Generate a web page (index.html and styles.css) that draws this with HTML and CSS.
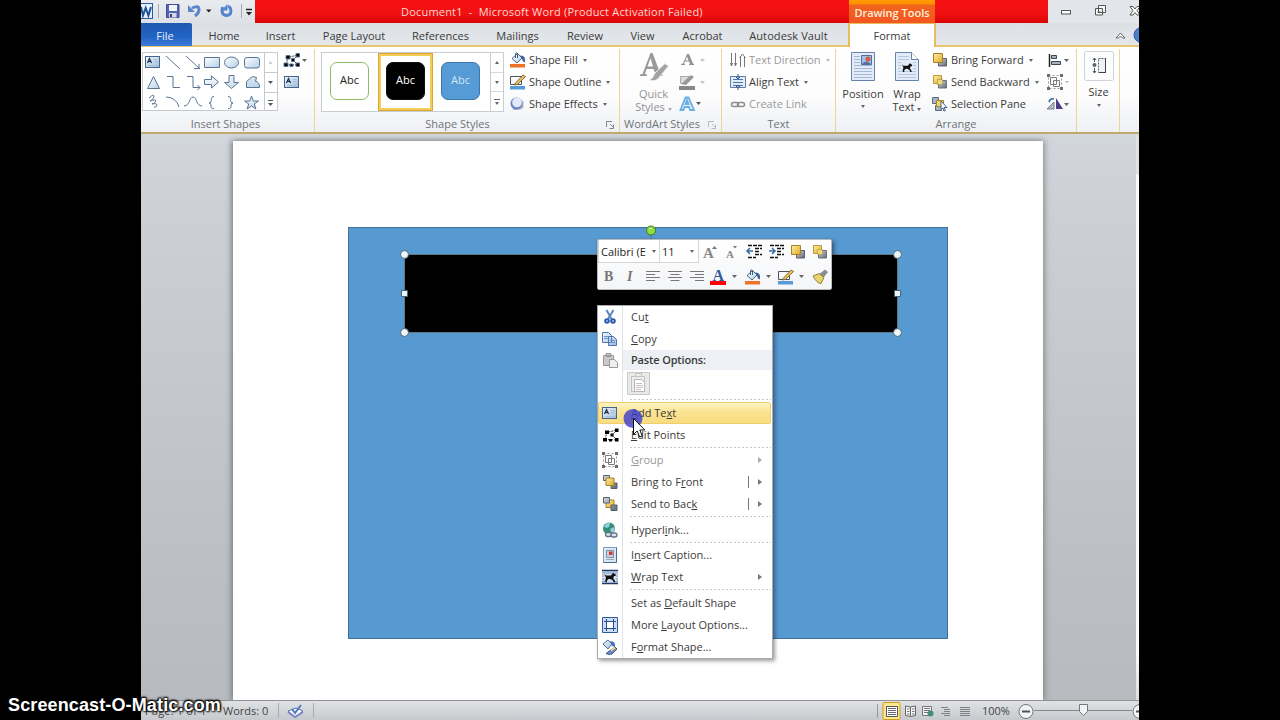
FILE: index.html
```html
<!DOCTYPE html>
<html lang="en">
<head>
<meta charset="utf-8">
<title>Document1 - Microsoft Word</title>
<link rel="stylesheet" href="styles.css">
</head>
<body>
<svg class="defs" width="0" height="0">
  <defs>
    <linearGradient id="paleBlue" x1="0" y1="0" x2="1" y2="1"><stop offset="0" stop-color="#fff"/><stop offset="1" stop-color="#b4d0e8"/></linearGradient>
    <linearGradient id="boxBlue" x1="0" y1="0" x2="1" y2="1"><stop offset="0" stop-color="#f4f8fc"/><stop offset="1" stop-color="#9dbad9"/></linearGradient>
    <linearGradient id="gold" x1="0" y1="0" x2="1" y2="1"><stop offset="0" stop-color="#fff0a0"/><stop offset="1" stop-color="#dfa92c"/></linearGradient>
    <linearGradient id="steel" x1="0" y1="0" x2="1" y2="1"><stop offset="0" stop-color="#d5dae2"/><stop offset="1" stop-color="#5c6675"/></linearGradient>
  </defs>
  <symbol id="textbox" viewBox="0 0 16 14"><rect x=".5" y="1.500" width="14" height="11" fill="url(#boxBlue)" stroke="#45658e"/><path d="M2.500 8 4.500 3.500 6.500 8M3.200 6.500h2.600" fill="none" stroke="#1b2f52" stroke-width="1.200"/><path d="M8.500 4.500h4M8.500 6.500h4M3 10.500h10" stroke="#a9bfd6"/></symbol>
  <symbol id="points" viewBox="0 0 18 14"><path d="M3.500 11.500 4.500 4.500 15 2 10 7 15 12Z" fill="none" stroke="#333" stroke-dasharray="2 1"/><path d="M3 2.500h4v3.500h-4zM1 10h4v3.500h-4zM13 0.500h3.500v3.500h-3.500zM8.500 5.500h3v3h-3zM13 10h3.500v3.500h-3.500zM7 11h3v2.500h-3z" fill="#000"/></symbol>
  <symbol id="forward" viewBox="0 0 16 16"><path d="M6.500 6.500h8v7.500h-8z" fill="url(#steel)" stroke="#59616c"/><path d="M1.500 1.500h9v9h-9z" fill="url(#gold)" stroke="#a88026"/></symbol>
  <symbol id="backward" viewBox="0 0 16 16"><path d="M1.500 1.500h8v8h-8z" fill="url(#gold)" stroke="#bd9a40"/><path d="M6.500 6.500h8v7.500h-8z" fill="url(#steel)" stroke="#69717c"/><path d="M5.500 5.500h5v5h-5z" fill="#eedb78" stroke="#a98f3c" stroke-width=".6"/></symbol>
  <symbol id="tofront" viewBox="0 0 16 16"><path d="M1.500 1.500h6v5h-6zM9 9h6v5.500H9z" fill="url(#steel)" stroke="#59616c"/><path d="M4 4h8v7.500H4z" fill="url(#gold)" stroke="#a88026"/></symbol>
  <symbol id="toback" viewBox="0 0 16 16"><path d="M4 4h8v7.500H4z" fill="url(#gold)" stroke="#a88026"/><path d="M1.500 1.500h6v5.500h-6zM9 9h6v5.500H9z" fill="url(#steel)" stroke="#59616c"/></symbol>
  <symbol id="group" viewBox="0 0 16 16"><path d="M1.500 1.500h13v13h-13z" fill="none" stroke="#999" stroke-dasharray="2 2"/><path d="M3.500 3.500h6v7h-6zM6.500 6.500h6v6h-6z" fill="none" stroke="#7c7c7c"/><path d="M0 0h3v3H0zM13 0h3v3h-3zM0 13h3v3H0zM13 13h3v3h-3z" fill="#6d6d6d"/></symbol>
  <symbol id="bucket" viewBox="0 0 18 16"><path d="M3 6.500 8.500 1.500 13 6 8 11Z" fill="url(#paleBlue)" stroke="#4c6486"/><path d="M6.500 6V1.500Q8-.5 8.500 2v4" fill="none" stroke="#455e83"/><path d="M11 3.500q6-.5 5 7-3-1-3-4.500z" fill="#3a5f96"/><path d="M1 12h15v3.500H1z" fill="#ed7426"/></symbol>
  <symbol id="outline" viewBox="0 0 18 16"><path d="M1.500 2.500h11v8h-11z" fill="#f7f9fb" stroke="#4a5362"/><path d="M6 9.500 14 1l2.500 1.500L8.500 10.500 5.500 11z" fill="#edbd58" stroke="#70542b" stroke-width=".8"/><path d="M1 12h15v3.500H1z" fill="#569ad6"/></symbol>
  <symbol id="dog" viewBox="0 0 12 10"><path d="M0 1.500 2 3h5L8.500 1 9.500 0 10 1.200l2 .8-.6 1.500H10l-.8 2.500 1.300 1.500.8 2.500H9.700L8.500 7.500 6 6.500H4.500L3 8v2H1.500L1.200 7.500 2 5.500 1.500 4z" fill="#111"/></symbol>
  <symbol id="launcher" viewBox="0 0 8 8"><path d="M.5 6V.5H6M4 3l3 3M7.500 3.500v4h-4" fill="none" stroke="#81868c"/></symbol>
</svg>

<div class="window">
  <header class="titlebar">
    <div class="quick">
      <svg width="114" height="23" viewBox="141 0 114 23">
        <rect x="134.500" y="3.500" width="18" height="15" fill="#e6f0fb" stroke="#2a5ca0"/><path d="m141 7 2 8.500 2.700-7.500 2.700 7.500L151 7" fill="none" stroke="#1f529b" stroke-width="2"/>
        <path d="M158.500 4v14M241.500 4v14" stroke="#a7acb3"/>
        <path d="M166.500 4.500h12.500v13h-12.500z" fill="#5664b4" stroke="#404b92"/><path d="M169 5h8v6h-8z" fill="#eef4fc"/><path d="M169 13h7.500v4.500h-7.500z" fill="#d5dbe8"/><path d="M170 14h2v3h-2z" fill="#353f7c"/>
        <path d="M192 8q7-3.500 7 2 0 3-4 6" fill="none" stroke="#5c86cc" stroke-width="3"/><path d="m188 5v7h7z" fill="#5c86cc"/>
        <path d="M206 9.500h5.500l-2.700 3zM246 12h6l-3 3.500z" fill="#222"/><path d="M246 9.500h6" stroke="#222" stroke-width="1.500"/>
        <path d="M222.500 7q-2 8 4 8.500 6-.5 4-7-1-2-2.500-2" fill="none" stroke="#5583cf" stroke-width="3"/><path d="M227.500 4v6.500h-6z" fill="#5583cf"/>
      </svg>
    </div>
    <div class="caption">Document1&nbsp; -&nbsp; Microsoft Word (Product Activation Failed)</div>
    <div class="tools">Drawing Tools</div>
    <div class="redtail"></div>
    <svg class="controls" width="91" height="23" viewBox="1048 0 91 23">
      <rect x="1061.500" y="10.500" width="9" height="3.500" fill="#fff" stroke="#555"/>
      <path d="M1098.500 5.500h7v7h-7zM1095.500 8.500h7v6.500h-7z" fill="#f6f7f8" stroke="#555"/><path d="M1097.500 12h3" stroke="#555"/>
      <path d="M1130 6.500h3l2 2.500 2-2.500h3l-3 4 3 4.500h-3l-2-2.500-2 2.500h-3l3-4.500z" fill="#fff" stroke="#555"/>
    </svg>
  </header>

  <nav class="tabs">
    <span class="tab file">File</span><span class="tab home">Home</span><span class="tab insert">Insert</span><span class="tab layout">Page Layout</span><span class="tab refs">References</span><span class="tab mail">Mailings</span><span class="tab review">Review</span><span class="tab view">View</span><span class="tab acro">Acrobat</span><span class="tab vault">Autodesk Vault</span><span class="tab format">Format</span>
    <svg class="help" width="26" height="23" viewBox="1113 23 26 23"><path d="m1116 38 4.500-5 4.500 5h-2.500l-2-2-2 2z" fill="#fff" stroke="#666"/><circle cx="1141.500" cy="35" r="7.500" fill="#4a7fcb" stroke="#2d5a9e"/></svg>
  </nav>

  <section class="ribbon">
    <div class="group g-shapes">
      <div class="body">
        <svg width="170" height="66" viewBox="141 49 170 66" fill="none" stroke="#5b7494">
          <path d="M142.500 52.500h135v58h-135z" fill="#fff" stroke="#c5cad0"/><path d="M264.500 52.500v58M264.500 72.500h13M264.500 92.500h13" stroke="#c5cad0"/>
          <use href="#textbox" x="145" y="55" width="16" height="14"/>
          <path d="m166 56 14 13M186 56l14 13m-1-5v4.500h-5"/>
          <path d="M204.500 57.500h15v10h-15z" fill="url(#paleBlue)"/><ellipse cx="231.500" cy="62.500" rx="7" ry="5.500" fill="url(#paleBlue)"/><rect x="244.500" y="57.500" width="15" height="10.500" rx="2.500" fill="url(#paleBlue)"/>
          <path d="m153.500 76.500 6 12h-12z" fill="url(#paleBlue)"/><path d="M167 76.500h6v11h7M187 76.500h6v11h7m-2.500-2.500 2.500 2.500-2.500 2.500"/>
          <path d="M204.500 79.500h7v-3.500l7 6-7 6v-3.500h-7zM229 75.500h5v7h4.500l-7 6-7-6h4.500zM246.500 87.500v-6l6-5 4 1-1 4q4 0 4 6z" fill="url(#paleBlue)"/>
          <path d="M149 98q5-5 5-1-1 3-4 4 6-2 6 0-1 2-4 3 5-1 5 1-1 3-3 2M166 97q10 0 13 10M184 106c6 0 5-9 9-9s3 9 9 9M214 96.500c-4 0-2 4-3 5.500q-1 1-2 1 2 0 2 2c0 3 0 3.500 3 3.500M228 96.500c4 0 2 4 3 5.500q1 1 2 1-2 0-2 2c0 3 0 3.500-3 3.500"/>
          <path d="m251.500 96 1.800 5h5.200l-4.200 3 1.600 5-4.400-3-4.400 3 1.600-5-4.200-3h5.200z" fill="url(#paleBlue)"/>
          <path d="M268.500 64h4l-2-3z" fill="#ccc" stroke="none"/><path d="M268 81h5l-2.500 3zM268 103h5l-2.500 3z" fill="#555" stroke="none"/><path d="M268 100.500h5" stroke="#555"/>
          <use href="#points" x="283" y="53" width="18" height="14"/><path d="M302 59h5l-2.500 3z" fill="#666" stroke="none"/>
          <use href="#textbox" x="284" y="75" width="16" height="14"/>
        </svg>
      </div>
      <div class="label">Insert Shapes</div>
    </div>

    <div class="group g-styles">
      <div class="body">
        <div class="gallery">
          <div class="cell"><div class="swatch green">Abc</div></div>
          <div class="cell picked"><div class="swatch black">Abc</div></div>
          <div class="cell"><div class="swatch blue">Abc</div></div>
          <div class="scroll"><span><i class="up"></i></span><span><i class="down"></i></span><span><i class="bar"></i><i class="down"></i></span></div>
        </div>
        <div class="rows">
          <div class="row"><svg width="18" height="16"><use href="#bucket"/></svg><span>Shape Fill</span><i class="down"></i></div>
          <div class="row"><svg width="18" height="16"><use href="#outline"/></svg><span>Shape Outline</span><i class="down"></i></div>
          <div class="row"><svg width="18" height="16"><path d="M6 5h8.500v7q-4 3-11 1.500z" fill="#b2b7ca"/><circle cx="7.500" cy="7.500" r="6" fill="#6c84c6"/><circle cx="8" cy="6.500" r="4.800" fill="#e3ebfb"/></svg><span>Shape Effects</span><i class="down"></i></div>
        </div>
      </div>
      <div class="label"><span class="push">Shape Styles</span><svg class="launch" width="8" height="8"><use href="#launcher"/></svg></div>
    </div>

    <div class="group g-wordart">
      <div class="body">
        <div class="big quickstyles">
          <svg width="32" height="34" viewBox="0 0 32 34"><path d="M2 26h7v-1.500l-2-.5 1.500-5h7l2 5-2 .5V26h9v-1.500l-2-.5L14.500 3h-2L4.500 24l-2.500.5zM9.500 16.500 12.500 8l2.500 8.500z" fill="#9a9a9a"/><path d="m17 23 10-9.500 3.500 2.500-9 11q-3 5-10 3 4-2 5.500-7z" fill="#a2a2a2" stroke="#eee"/></svg>
          <span>Quick</span><span>Styles<i class="down"></i></span>
        </div>
        <svg width="32" height="66" viewBox="676 49 32 66"><path d="M681 65h4v-1l-1-.5 1-2h4l1 2-1 .5v1h5v-1l-1-.5-4-9.500h-2l-4 9.500-2 .5zm4.500-4.500 1.500-4 1.500 4z" fill="#929292"/><path d="M680.500 76.500h9l-6 7h-3z" fill="#ddd" stroke="#aaa"/><path d="m681 84 10-9 3 2-8 8z" fill="#999"/><path d="M679 86h16v4h-16z" fill="#888"/><path d="m680.500 110 5-12.500h3l5.500 12.500h-4l-1-3h-4.500l-1 3zm5-6h3l-1.500-4z" fill="#dff0ff" stroke="#6daee0" stroke-width="1.800"/><path d="M700 59h5l-2.500 3zM700 81h5l-2.500 3z" fill="#c4c4c4"/><path d="M696 102h5l-2.500 3z" fill="#555"/></svg>
      </div>
      <div class="label"><span>WordArt Styles</span><svg class="launch pale" width="8" height="8"><use href="#launcher"/></svg></div>
    </div>

    <div class="group g-text">
      <div class="body rows">
        <div class="row off"><svg width="16" height="16" fill="none" stroke="#777"><path d="M1.500 1v13m-1-3 1 3 1-3M5.500 1v13m-1-3 1 3 1-3M10.500 4v11M14.500 4v11M9.500 6l3-4 3 4"/></svg><span>Text Direction</span><i class="down"></i></div>
        <div class="row"><svg width="16" height="16"><path d="M.5 2.500h15v11H.5z" fill="#e3edf8" stroke="#5f7da4"/><path d="M3 5.500h10M3 8.500h10M3 11.500h10" stroke="#4e77aa"/><path d="M8 0v5M8 16v-5M6 3l2 2 2-2M6 13l2-2 2 2" fill="none" stroke="#345b91"/></svg><span>Align Text</span><i class="down"></i></div>
        <div class="row off"><svg width="16" height="16" fill="none" stroke="#8c8c8c"><rect x="1.500" y="6.500" width="7" height="4" rx="2" stroke-width="1.500"/><rect x="7.500" y="6.500" width="7" height="4" rx="2" stroke-width="1.500"/></svg><span>Create Link</span></div>
      </div>
      <div class="label">Text</div>
    </div>

    <div class="group g-arrange">
      <div class="body">
        <div class="big position">
          <svg width="26" height="32"><path d="M1.500 1.500h23v28h-23z" fill="#e2ebf7" stroke="#6683ac"/><path d="M4 14.500h18M4 17.500h18M4 20.500h18M4 23.500h18M4 26.500h18M4 5.500h6M4 8.500h6M4 11.500h6" stroke="#a2b9d5"/><path d="M11.500 4.500h10v9h-10z" fill="#9fc1ea" stroke="#52709e"/><circle cx="18" cy="8" r="2.500" fill="#d35a45"/><path d="M12 13q4-5 9 0z" fill="#5d6fa0"/></svg>
          <span>Position</span><i class="down"></i>
        </div>
        <div class="big wrap">
          <svg width="26" height="32"><path d="M1.500 1.500h16l7 7v21h-23z" fill="#e2ebf7" stroke="#6683ac"/><path d="M17.500 1.500v7h7" fill="#fff" stroke="#6683ac"/><path d="M4 5.500h11M4 8.500h11M4 11.500h3M4 14.500h3M4 17.500h3M19 11.500h3M19 14.500h3M19 17.500h3M4 20.500h18M4 23.500h18M4 26.500h18" stroke="#b4c8df"/><use href="#dog" x="7.500" y="12" width="11" height="9"/></svg>
          <span>Wrap</span><span>Text<i class="down"></i></span>
        </div>
        <div class="rows">
          <div class="row"><svg width="16" height="16"><use href="#forward"/></svg><span>Bring Forward</span><i class="down"></i></div>
          <div class="row"><svg width="16" height="16"><use href="#backward"/></svg><span>Send Backward</span><i class="down"></i></div>
          <div class="row"><svg width="16" height="16"><path d="M.5 1.500h6v6h-6zM3.500 9.500h6v5h-6z" fill="#aab5c4" stroke="#5d6b7e"/><path d="M4.500 4.500h7v6h-7z" fill="#efd768" stroke="#a8862b"/><path d="m9 5 6 6.500h-3l1.500 3-1.500.5-1-3-2 1.500z" fill="#fff" stroke="#48628f"/></svg><span>Selection Pane</span></div>
        </div>
        <svg class="mini" width="26" height="66" viewBox="1045 49 26 66"><path d="M1048.500 54v13" stroke="#222" stroke-width="1.500"/><path d="M1050.500 55.500h5v3h-5zM1050.500 61.500h9v3h-9z" fill="#a9b4c1" stroke="#3d4650"/><use href="#group" x="1046" y="74" width="16" height="16"/><path d="m1046 109 7-7v7z" fill="#b6bdc8" stroke="#77808c"/><path d="m1055 98 7 11h-7z" fill="#503c86"/><path d="M1048 102q1-4 5-3" fill="none" stroke="#3468ad" stroke-width="1.500"/><path d="M1063 59h5l-2.500 3zM1063 103h5l-2.500 3z" fill="#666"/><path d="M1064 81h4l-2 2.500z" fill="#bbb"/></svg>
      </div>
      <div class="label">Arrange</div>
    </div>

    <div class="group g-size">
      <div class="big size">
        <svg width="30" height="30"><rect x=".5" y=".5" width="29" height="29" rx="2" fill="#fdfdfe" stroke="#ccd3da"/><path d="M14.500 7.500h7v14h-7z" fill="#eef3f8" stroke="#666" stroke-dasharray="2 1"/><path d="M21.500 7v15M15 21.500h7" stroke="#444"/><path d="M10.500 7v4M10.500 17v5M9 9l1.500-2L12 9M9 20l1.500 2 1.500-2" fill="none" stroke="#456"/><circle cx="10.500" cy="14" r="2" fill="#567"/></svg>
        <span>Size</span><i class="down"></i>
      </div>
    </div>
  </section>

  <main class="desk">
    <div class="page">
      <div class="bluebox"></div>
      <div class="blackbox"></div>
      <svg class="handles" width="510" height="120" viewBox="398 222 510 120">
        <path d="M404.500 254.500h493v78h-493zM651 234v20" fill="none" stroke="#61788b"/>
        <g fill="#e9f6fb" stroke="#4b6470"><circle cx="404.500" cy="254.500" r="4"/><circle cx="897.500" cy="254.500" r="4"/><circle cx="404.500" cy="332.500" r="4"/><circle cx="897.500" cy="332.500" r="4"/><path d="M401.500 290.500h6v6h-6zM894.500 290.500h6v6h-6z"/></g>
        <circle cx="651" cy="230.500" r="4.500" fill="#8ddf3f" stroke="#427622"/><path d="M649 228.500h3" stroke="#d9ffb0"/>
      </svg>
    </div>
    <div class="vscroll"></div>
  </main>

  <footer class="status">
    <span class="pages">Page: 1 of 1</span><span class="words">Words: 0</span>
    <svg width="36" height="20" viewBox="278 700 36 20"><path d="M278.500 703v15M313.500 703v15" stroke="#a9adb2"/><path d="m288 711 8-3 7 3-8 6z" fill="#fff" stroke="#5370b2"/><path d="m288 712 7 5 8-5" fill="none" stroke="#7d86c8" stroke-width="2"/><path d="m292 709 3 4 6-8" fill="none" stroke="#5279bd" stroke-width="2"/></svg>
    <svg class="views" width="100" height="20" viewBox="876 700 100 20"><path d="M877.500 704v14" stroke="#999"/><rect x="883" y="702.500" width="17" height="17" rx="1" fill="#fbe78c" stroke="#d39b20"/><path d="M886.500 706.500h11v10h-11z" fill="#fff" stroke="#555"/><path d="M888 708.500h8M888 710.500h8M888 712.500h8M888 714.500h8" stroke="#667"/><path d="m905.500 706 5 1 5-1v9.500l-5 1-5-1zM910.500 707v9" fill="#f7f7f7" stroke="#666"/><path d="M907 709h2.500M907 711.500h2.500M907 714h2.500M912 709h2.500M912 711.500h2.500M912 714h2.500" stroke="#777"/><path d="M922.500 706.500h9v9h-9z" fill="#f5f5f5" stroke="#777"/><path d="M924 708.500h6M924 710.500h6M924 712.500h4" stroke="#777"/><circle cx="930.500" cy="713.500" r="3" fill="#458d73"/><path d="M941 707.500h7M944 709.500h6M944 711.500h6M941 713.500h9M944 715.500h6M960 707.500h10M960 709.500h10M960 711.500h10M960 713.500h10M960 715.500h10" stroke="#7d8186"/></svg>
    <span class="pct">100%</span>
    <svg width="125" height="20" viewBox="1014 700 125 20"><path d="M1034 710.500h98" stroke="#85898e"/><g fill="#f1f2f3" stroke="#777"><circle cx="1026" cy="711.500" r="7"/><circle cx="1140" cy="711.500" r="7"/><path d="M1079.500 704.500h8v7l-4 4-4-4z"/></g><path d="M1022 711.500h8M1136 711.500h8" stroke="#555" stroke-width="2"/></svg>
  </footer>
</div>

<div class="minibar">
  <div class="line top">
    <span class="box font">Calibri (E<i class="down"></i></span><span class="box pt">11<i class="down"></i></span>
    <svg width="132" height="24" viewBox="699 240 132 24"><g class="serif" fill="#888" font-weight="bold"><text x="703" y="258" font-size="15">A</text><text x="726" y="258" font-size="11">A</text></g><path d="M712 249h5l-2.500-3zM733 246h4l-2 2.500z" fill="#777"/><path d="M748 245.500h14M755 248.500h7M755 251.500h5M755 254.500h7M748 257.500h8M770 245.500h14M777 248.500h7M777 251.500h5M777 254.500h7M770 257.500h8" stroke="#111" stroke-width="1.600" stroke-dasharray="4 1"/><path d="M753 251h-6m3-3-3 3 3 3M769 251h6m-3-3 3 3-3 3" fill="none" stroke="#3a67a9" stroke-width="1.500"/><use href="#forward" x="790" y="244" width="16" height="16"/><use href="#backward" x="812" y="244" width="16" height="16"/></svg>
  </div>
  <div class="line bottom">
    <svg width="233" height="25" viewBox="598 264 233 25"><g class="serif" fill="#777"><text x="604" y="281" font-size="14" font-weight="bold">B</text><text x="627" y="281" font-size="14" font-style="italic" font-weight="bold">I</text></g><path d="M646 271.500h14M646 274.500h9M646 277.500h14M646 280.500h9M668 271.500h14M670.500 274.500h9M668 277.500h14M670.500 280.500h9M690 271.500h14M695 274.500h9M690 277.500h14M695 280.500h9" stroke="#777"/><text class="serif" x="712.500" y="281" font-size="16" font-weight="bold" fill="#31599d">A</text><path d="M710 281h16v4h-16z" fill="#f00"/><use href="#bucket" x="744" y="269" width="18" height="16"/><use href="#outline" x="777" y="269" width="18" height="16"/><path d="M732 275h5l-2.500 3zM766 275h5l-2.500 3zM799 275h5l-2.500 3z" fill="#666"/><path d="m820 274 5-4 2.500 2-4 5z" fill="#8c8f98" stroke="#666" stroke-width=".6"/><path d="m813 276 6-2.500 5 4-3 6q-4 0-8-7.500z" fill="#e8d36b" stroke="#92833d"/></svg>
  </div>
</div>

<div class="menu">
  <div class="item"><svg width="16" height="16"><path d="m4.500 1 5 9M11.500 1 6 10" stroke="#5c86c0" stroke-width="2"/><g fill="none" stroke="#2a5bb0" stroke-width="2"><circle cx="5" cy="12" r="1.800"/><circle cx="11" cy="12" r="1.800"/></g></svg><span>Cu<u>t</u></span></div>
  <div class="item"><svg width="16" height="16"><g fill="url(#boxBlue)" stroke="#4a76b5"><path d="M.5 1.500h6l3 3v7h-9zM6.500 5.500h5l3 3v6h-8z"/></g><path d="M2 5.500h4M2 7.500h4M8 9.500h5M8 11.500h5" stroke="#6591c9"/></svg><span><u>C</u>opy</span></div>
  <div class="item head"><svg width="16" height="16"><path d="M1.500 3.500h10v10h-10zM4 1.500h5v3H4z" fill="#c9c9c9" stroke="#999"/><path d="M7.500 7.500h5l3 3v5h-8z" fill="#eee" stroke="#999"/></svg><span>Paste Options:</span></div>
  <div class="paste"><svg width="23" height="23"><path d="M.5.500h22v22H.500z" fill="#e9e9e9" stroke="#cacaca"/><path d="M4.500 4.500h13v15h-13zM8.500 1.500h6v3h-6z" fill="#ededed" stroke="#c3c3c3"/><path d="M7.500 7.500h7l3 3v9h-10z" fill="#fff" stroke="#b5b5b5"/><path d="M9 11.500h6M9 13.500h7M9 15.500h7M9 17.500h5" stroke="#ccbebe"/></svg></div>
  <div class="sep"></div>
  <div class="item hot"><svg width="16" height="14"><use href="#textbox"/></svg><span><u>A</u>dd Te<u>x</u>t</span></div>
  <div class="item"><svg width="18" height="14"><use href="#points"/></svg><span><u>E</u>dit Points</span></div>
  <div class="sep"></div>
  <div class="item off"><svg width="16" height="16"><use href="#group"/></svg><span><u>G</u>roup</span><i class="right"></i></div>
  <div class="item"><svg width="16" height="16"><use href="#tofront"/></svg><span class="wide">Bring to F<u>r</u>ont</span><i class="right split"></i></div>
  <div class="item"><svg width="16" height="16"><use href="#toback"/></svg><span>Send to Bac<u>k</u></span><i class="right split"></i></div>
  <div class="sep"></div>
  <div class="item"><svg width="16" height="16"><circle cx="7" cy="6.500" r="6" fill="#378e78"/><path d="M2 4q3-4 6-3l-1 4-3 1zM8 7l4-2q2 4-2 7z" fill="#8fcfdf"/><g fill="#dde3ea" stroke="#647385" stroke-width="1.300"><rect x="3.500" y="10.500" width="6" height="4" rx="2"/><rect x="9" y="11" width="6" height="4" rx="2"/></g></svg><span>Hyperl<u>i</u>nk...</span></div>
  <div class="sep"></div>
  <div class="item"><svg width="16" height="16"><path d="M1.500.500h13v15h-13z" fill="#dbe6f5" stroke="#7f9cc4"/><path d="M14.500.500v15h-13" fill="none" stroke="#4d6a96"/><path d="M4.500 3.500h7v7h-7z" fill="#c8d2e0" stroke="#7c8fa9"/><path d="M7 4.500h3.500V8H7z" fill="#d33"/><path d="M4 12.500h8" stroke="#9ab"/></svg><span>I<u>n</u>sert Caption...</span></div>
  <div class="item"><svg width="16" height="16"><path d="M0 1h16v14H0z" fill="#cfddf0"/><path d="M0 1.500h16M0 14.500h16" stroke="#1f3a63" stroke-width="1.500"/><path d="M0 4h16M0 7h2M14 7h2M0 10h2M14 10h2M0 12.500h3M13 12.500h3" stroke="#7e98bd"/><use href="#dog" x="2" y="3.500" width="12" height="10"/></svg><span><u>W</u>rap Text</span><i class="right"></i></div>
  <div class="sep"></div>
  <div class="item"><svg width="16" height="16"></svg><span>Set as <u>D</u>efault Shape</span></div>
  <div class="item"><svg width="16" height="16"><path d="M.5.500h15v15H.500z" fill="#cbdcf4" stroke="#315a9b"/><path d="M4.500 2v12M11.500 2v12M2 4.500h12M2 11.500h12" stroke="#244f92"/><path d="M5 5h6v6H5z" fill="#fff"/></svg><span>More <u>L</u>ayout Options...</span></div>
  <div class="item"><svg width="16" height="16"><path d="m1 5 5-4 4 4-4 5z" fill="url(#boxBlue)" stroke="#4c6fa5"/><path d="M8 2q6 0 5 6L10 7z" fill="#4773b9"/><path d="m6 13 7-5 2 2-5 5q-4 1-6-.5z" fill="#6d8ecb" stroke="#3b5688"/><path d="m9 11.500 4-3" stroke="#f2d564" stroke-width="2"/></svg><span>F<u>o</u>rmat Shape...</span></div>
</div>

<svg class="pointer" width="30" height="34" viewBox="622 406 30 34"><circle cx="633" cy="418.500" r="9.500" fill="#3c3ccf" fill-opacity=".8"/><path d="M633.500 418.500v16l3.700-3.500 2.500 6 2.600-1-2.500-6h5z" fill="#fff" stroke="#111"/></svg>
<div class="watermark">Screencast-O-Matic.com</div>
</body>
</html>
```
FILE: styles.css
```css
* { box-sizing: border-box; }
body { margin: 0; width: 1280px; height: 720px; overflow: hidden; position: relative; background: #000; font: 11px/14px "Open Sans", "Noto Sans", sans-serif; color: #3b3b3b; white-space: nowrap; display: flex; justify-content: center; }
svg { display: block; flex: none; }
.defs { position: absolute; }
.serif { font-family: "Liberation Serif", serif; }
.window { width: 998px; height: 720px; display: flex; flex-direction: column; overflow: hidden; }
i.down, i.up, i.right { display: inline-block; flex: none; width: 0; height: 0; border: 2.5px solid transparent; border-bottom: 0; border-top: 3px solid #666; }
i.up { border-top: 0; border-bottom: 3px solid #666; }
.off { color: #999; }
.off i.down { border-top-color: #bbb; }

.titlebar { height: 23px; display: flex; background: #dfe3e8; }
.quick { width: 114px; background: linear-gradient(#e9ecef, #dde1e6); }
.caption { width: 594px; padding-left: 146px; line-height: 23px; letter-spacing: .2px; color: #ffd9cf; background: linear-gradient(#f71013, #f11012 60%, #d80505); }
.tools { width: 86px; text-align: center; line-height: 20px; padding-top: 3px; color: #fff0df; font-weight: 600; background: linear-gradient(#ff9c00 0, #ff9200 4px, #f1641d 5px, #f35622 100%); }
.redtail { width: 113px; background: linear-gradient(#f71013, #f11012 60%, #d80505); }
.controls { background: #e2e5e9; }

.tabs { height: 24px; display: flex; background: linear-gradient(#dcdfe4, #e4e7ea); border-bottom: 2px solid #ebc66d; line-height: 25px; }
.tab { text-align: center; height: 22px; }
.tab.file { width: 51px; height: 23px; padding-right: 3px; color: #e6f1ff; background: linear-gradient(#1e5ab0, #2263c4 60%, #3b7cdb); border-radius: 0 2px 0 0; }
.home { width: 61px; padding-left: 3px; } .insert { width: 55px; } .layout { width: 92px; } .refs { width: 81px; }
.mail { width: 73px; } .review { width: 62px; } .view { width: 53px; } .acro { width: 67px; } .vault { width: 107px; letter-spacing: .1px; padding-right: 2px; }
.tab.format { width: 88px; margin-left: 5px; height: 25px; line-height: 23px; background: #fff; border: 1px solid #e8bd5c; border-width: 1px 2px 0; }
.help { margin-left: auto; }

.ribbon { height: 87px; padding-top: 2px; display: flex; background: linear-gradient(#fff, #fcfcfd 60%, #eef0f3); border-bottom: 2px solid #c2a869; }
.group { display: flex; flex-direction: column; border-right: 1px solid #ecd49b; height: 83px; }
.body { height: 66px; display: flex; }
.label { height: 16px; line-height: 17px; text-align: center; color: #6f747a; display: flex; justify-content: center; position: relative; }
.launch { position: absolute; right: 5px; top: 6px; }
.pale { opacity: .5; }
.g-shapes { width: 174px; } .g-shapes .label { padding-right: 4px; }
.g-styles { width: 305px; } .g-styles .push { padding-right: 19px; }
.g-wordart { width: 102px; } .g-wordart .label { justify-content: flex-start; padding-left: 4px; }
.g-text { width: 114px; }
.g-arrange { width: 241px; }
.g-size { width: 43px; }
.gallery { width: 183px; height: 60px; margin: 3px 0 0 6px; display: flex; border: 1px solid #c8cdd3; background: #fff; }
.cell { width: 55.500px; padding: 9px 0 0 8px; }
.cell.picked { border: 3px solid #f3cd5c; outline: 1px solid #dfa72a; outline-offset: -1px; padding: 6px 0 0 5.500px; background: #fff; }
.swatch { width: 39px; height: 38px; border-radius: 7px; text-align: center; line-height: 34px; }
.green { border: 1.500px solid #8bbb67; color: #222; } .black { background: #000; color: #fff; border: 1px solid #111; } .blue { background: #569bd5; color: #cfe4f5; border: 1px solid #3b77ac; }
.scroll { margin-left: auto; width: 13px; border-left: 1px solid #c8cdd3; display: flex; flex-direction: column; }
.scroll span { flex: 1; display: flex; flex-direction: column; align-items: center; justify-content: center; gap: 2px; border-bottom: 1px solid #d5d9dd; }
.scroll span:last-child { border: 0; }
.bar { width: 6px; height: 1px; background: #666; }
.rows { display: flex; flex-direction: column; }
.g-styles .rows { margin-left: 5px; }
.row { height: 22px; display: flex; align-items: center; }
.row span { margin-left: 3px; } .row i { margin-left: 5px; }
.g-styles .row span { margin-left: 2px; }
.big { display: flex; flex-direction: column; align-items: center; line-height: 13px; }
.big i { margin-left: 3px; }
.quickstyles { width: 56px; padding-left: 11px; color: #929292; }
.quickstyles svg { margin: 1px 0 3px; } .quickstyles i.down { border-top-color: #aaa; }
.body.rows { padding-left: 8px; }
.position { width: 54px; padding-top: 2px; } .wrap { width: 34px; padding-top: 2px; }
.position svg, .wrap svg { margin-bottom: 4px; }
.position i { margin: 5px 0 0; }
.g-arrange .rows { margin-left: 8px; }
.g-arrange .mini { margin-left: auto; margin-right: 4px; }
.size { padding-top: 2px; padding-left: 1px; } .size svg { margin-bottom: 4px; } .size i { margin: 6px 0 0; }

.desk { height: 566px; position: relative; overflow: hidden; display: flex; background: linear-gradient(#d2d6dd, #ccd0d4 15%, #bcc0c4 75%, #b7bbbf); }
.page { width: 810px; margin: 7px 0 0 92px; background: #fff; box-shadow: -2px 0 5px #777c, 2px 0 6px #7779; position: relative; }
.vscroll { width: 3px; margin-left: auto; background: linear-gradient(#dfe0e3 40px, #f8f8fa 41px 520px, #dcdde3); }
.bluebox { position: absolute; left: 115px; top: 86px; width: 600px; height: 412px; background: #5799d1; border: 1px solid #41719c; }
.blackbox { position: absolute; left: 171px; top: 113px; width: 493px; height: 78px; background: #000; }
.handles { position: absolute; left: 165px; top: 81px; }

.status { height: 20px; display: flex; border-top: 1px solid #8e9297; background: linear-gradient(#e0e2e4, #c6c9cd); line-height: 20px; color: #444; }
.status svg { margin-top: -1px; }
.pages { width: 78px; padding-left: 4px; letter-spacing: .2px; } .words { width: 59px; padding-left: 4px; }
.views { margin-left: auto; } .pct { width: 38px; padding-left: 6px; }

.minibar { position: absolute; left: 597px; top: 239px; width: 235px; height: 51px; border: 1px solid #b7bbc0; border-radius: 2px; background: linear-gradient(#fff, #f4f5f7); box-shadow: 2px 2px 4px #0007; color: #222; }
.line { display: flex; height: 24px; }
.box { display: flex; align-items: center; justify-content: space-between; height: 23px; border: 1px solid #d1d5d9; border-top: 0; padding: 1px 4px 0 2px; background: #fff; }
.font { width: 62px; padding: 1px 3px 0 2px; } .pt { width: 39px; border-left: 0; }

.menu { position: absolute; left: 597px; top: 305px; width: 176px; height: 354px; border: 1px solid #a7abb0; background: linear-gradient(90deg, #fff 24px, #dfe3e7 24px 25px, #fff 25px); box-shadow: 2px 2px 4px #0006; }
.item { height: 22px; display: flex; align-items: center; padding: 0 10px 0 4px; }
.item > svg { margin-right: 13px; } .item > svg[width="18"] { margin-right: 11px; }
.item i.right { margin-left: auto; border: 3px solid transparent; border-right: 0; border-left: 4px solid #777; }
.off i.right { border-left-color: #aaa; }
.item i.split { position: relative; }
.item i.split::before { content: ""; position: absolute; left: -14px; top: -6px; width: 1px; height: 12px; background: #777; }
.wide { letter-spacing: .1px; }
.menu u { text-underline-offset: 1px; text-decoration-thickness: 1px; }
.head { height: 20px; font-weight: 600; letter-spacing: -.15px; background: linear-gradient(90deg, transparent 25px, #edf0f4 25px); }
.paste { height: 28px; padding: 2px 0 0 29px; }
.sep { height: 3.500px; margin: 0 1px 0 32px; background: repeating-linear-gradient(90deg, #c6c9cd 0 2px, transparent 2px 4px) 0 50% / 100% 1px no-repeat; }
.hot { background: linear-gradient(#fff3c4, #fbe390 45%, #f8dc80); border: 1px solid #edcf70; border-radius: 2px; padding-left: 3px; margin-right: 1px; }
.pointer { position: absolute; left: 622px; top: 406px; }
.watermark { position: absolute; left: 8px; top: 695px; font: bold 18px/20px "Liberation Sans", sans-serif; letter-spacing: .13px; color: #fff; text-shadow: 0 0 2px #000, 1px 1px 2px #000, -1px -1px 2px #000, 1px -1px 2px #000; }
```
